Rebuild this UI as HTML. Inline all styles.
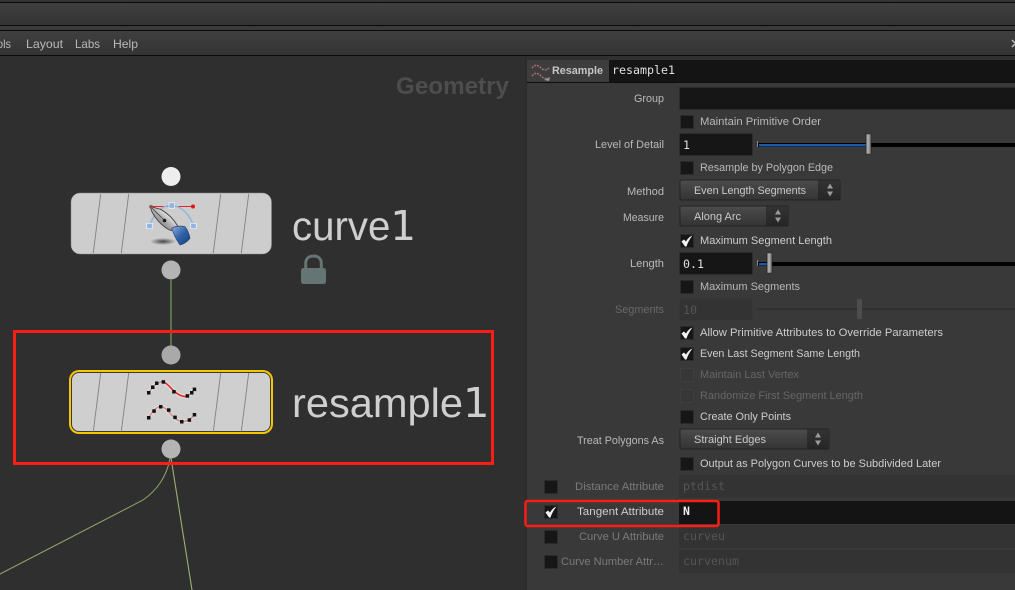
<!DOCTYPE html>
<html><head><meta charset="utf-8"><style>
html,body{margin:0;padding:0;background:#2f2f2f;width:1015px;height:590px;overflow:hidden}
svg{display:block}
text{font-family:"Liberation Sans",sans-serif;font-size:11px;fill:#b9b9b9}
.m{font-family:"DejaVu Sans Mono",monospace;font-size:11.5px;fill:#e0e0e0}
.dm{fill:#555;font-family:"DejaVu Sans Mono",monospace;font-size:11.5px}
.dl{fill:#686868}
.n{font-size:41px;fill:#cfcfcf}
.c{fill:#161616;stroke:#2b2b2b;stroke-width:1}
.dc{fill:#373737;stroke:#3f3f3f}
.t{fill:#cdcdcd}
</style></head><body>
<svg width="1015" height="590" viewBox="0 0 1015 590" xmlns="http://www.w3.org/2000/svg">
<defs>
<linearGradient id="bar" x1="0" y1="0" x2="0" y2="1"><stop offset="0" stop-color="#3f3f3f"/><stop offset="1" stop-color="#343434"/></linearGradient>
<linearGradient id="dd" x1="0" y1="0" x2="0" y2="1"><stop offset="0" stop-color="#4c4c4c"/><stop offset="1" stop-color="#343434"/></linearGradient>
<linearGradient id="ddr" x1="0" y1="0" x2="0" y2="1"><stop offset="0" stop-color="#333"/><stop offset="1" stop-color="#262626"/></linearGradient>
<linearGradient id="h" x1="0" y1="0" x2="1" y2="0"><stop offset="0" stop-color="#777"/><stop offset=".4" stop-color="#b5b5b5"/><stop offset="1" stop-color="#666"/></linearGradient>
<linearGradient id="cap" x1="0" y1="0" x2="1" y2="1"><stop offset="0" stop-color="#8fb0dc"/><stop offset=".5" stop-color="#2f62a8"/><stop offset="1" stop-color="#193f7c"/></linearGradient>
<linearGradient id="nib" x1="0" y1="1" x2="1" y2="0"><stop offset="0" stop-color="#4a4a4a"/><stop offset=".45" stop-color="#a8a8a8"/><stop offset=".7" stop-color="#efefef"/><stop offset="1" stop-color="#8a8a8a"/></linearGradient>
<radialGradient id="sh"><stop offset="0" stop-color="#444"/><stop offset="1" stop-color="#cdcdcd"/></radialGradient>
<path id="chk" d="M1 7L3.500 5L5.500 7C7 4.500 9 2 12 1C9.500 4 7.500 7.500 6 12L4.500 12Z" fill="#f2f2f2"/>
</defs>

<!-- Top bars -->
<rect width="1015" height="590" fill="#2f2f2f"/>
<rect y="0" width="1015" height="2" fill="#333"/>
<rect y="2" width="1015" height="1" fill="#0a0a0a"/>
<rect y="3" width="1015" height="22" fill="url(#bar)"/>
<rect y="25" width="1015" height="1" fill="#0a0a0a"/>
<rect y="26" width="1015" height="4" fill="#3a3a3a"/>
<rect y="30" width="1015" height="1" fill="#0a0a0a"/>
<rect y="31" width="1015" height="24" fill="url(#bar)"/>
<rect y="55" width="1015" height="1" fill="#0a0a0a"/>
<text x="-3" y="48" style="font-size:12px" textLength="14" lengthAdjust="spacingAndGlyphs">ols</text>
<text x="26" y="48" style="font-size:12px" textLength="37" lengthAdjust="spacingAndGlyphs">Layout</text>
<text x="75" y="48" style="font-size:12px" textLength="25" lengthAdjust="spacingAndGlyphs">Labs</text>
<text x="113" y="48" style="font-size:12px" textLength="25" lengthAdjust="spacingAndGlyphs">Help</text>
<path d="M1012 40l3 3M1015 44l-3 3" stroke="#bbb" stroke-width="1.500" fill="none"/>

<!-- Network -->
<text x="396" y="94" style="font-size:24px;font-weight:bold;fill:#4d4d4d" textLength="113" lengthAdjust="spacingAndGlyphs">Geometry</text>
<path d="M171 280V346" stroke="#7f9a62" stroke-width="1.200" fill="none"/>
<path d="M170 458C167 477 156 491 143 500L0 574" stroke="#8fa566" stroke-width="1" fill="none"/>
<path d="M171 458L192 590" stroke="#9bb070" stroke-width="1.100" fill="none"/>

<circle cx="171" cy="176.500" r="9.500" fill="#eeeeee"/>
<rect x="71" y="193" width="200.500" height="61" rx="9" fill="#cdcdcd" stroke="#8a8a8a" stroke-width=".5"/>
<path d="M100.700 194L93.300 253M128.700 194L121.300 253M220.700 194L213.300 253M248.700 194L241.300 253" stroke="#808080" stroke-width=".9" fill="none"/>
<circle cx="171" cy="270" r="9.500" fill="#b4b4b4"/>

<!-- pen icon -->
<ellipse cx="163" cy="241.500" rx="13" ry="3.500" fill="url(#sh)"/>
<path d="M150.700 206.500H193" stroke="#e22" stroke-width="1"/>
<circle cx="193" cy="206.500" r="2" fill="#e01818"/>
<path d="M149.500 226C154 213 162 205 171.500 205.500C182 206 190 215 193.500 226" stroke="#8fb8e0" stroke-width="1.500" fill="none"/>
<rect x="146.800" y="223.300" width="5.400" height="5.400" fill="#8db4e4" stroke="#fff" stroke-width=".6"/>
<rect x="169" y="202.800" width="5.400" height="5.400" fill="#8db4e4" stroke="#fff" stroke-width=".6"/>
<rect x="190.800" y="223.300" width="5.400" height="5.400" fill="#8db4e4" stroke="#fff" stroke-width=".6"/>
<path d="M150.500 206.500L161 209.500C168 213.500 174 219.500 178 226.500L171 230.500C163 227.500 155.500 219 151.500 211Z" fill="url(#nib)" stroke="#333" stroke-width=".8"/>
<circle cx="164.500" cy="220.500" r="1.800" fill="#1a1a1a"/>
<path d="M151 207L164 220" stroke="#333" stroke-width=".6"/>
<path d="M171.700 228.300C175 226 181 225.500 185 226.700C187.500 230 189.500 234.500 190 238.300C187.500 241.500 184 244 180 245C176.500 240 173.500 234 171.700 228.300Z" fill="url(#cap)" stroke="#1a3a70" stroke-width=".6"/>
<circle cx="151" cy="206.800" r="2" fill="#8c5a50" opacity=".8"/>

<text class="n" x="292" y="240" textLength="124" lengthAdjust="spacingAndGlyphs">curve<tspan style="font-family:'DejaVu Sans',sans-serif">1</tspan></text>
<!-- lock -->
<path d="M305.700 268V263.500C305.700 259 308.500 256 313.500 256S321.300 259 321.300 263.500V268" fill="none" stroke="#647573" stroke-width="3"/>
<rect x="301" y="268" width="25" height="16" rx="2.500" fill="#647573"/>

<circle cx="171" cy="355" r="9.500" fill="#a9a9a9"/>
<rect x="69" y="370" width="204" height="64" rx="10" fill="#f4c800"/>
<rect x="71" y="372" width="200" height="60" rx="8" fill="#3a3a3a"/>
<rect x="72" y="373" width="198" height="58" rx="7" fill="#cfcfcf"/>
<path d="M100.700 373L93.300 431.500M128.700 373L121.300 431.500M220.700 373L213.300 431.500M248.700 373L241.300 431.500" stroke="#808080" stroke-width=".9" fill="none"/>
<circle cx="171" cy="449" r="9.500" fill="#b4b4b4"/>

<!-- resample icon -->
<path d="M149 392.500C153 386 158 381.500 163.500 382C170 384 175 397 187 396.500C190 395 192 392 194.500 389" stroke="#e8e4e4" stroke-width="3.500" fill="none"/>
<path d="M149 417.500C153 410 157 406.500 161 406.500C168 407 174 423 184 421.500C189 421 192 418 194.500 414.500" stroke="#e8e4e4" stroke-width="3.500" fill="none"/>
<path d="M149 392.500C153 386 158 381.500 163.500 382" stroke="#bfa0a0" stroke-width="1.800" fill="none"/>
<path d="M163.500 382C170 384 175 397 187 396.500" stroke="#e2262a" stroke-width="1.600" fill="none"/>
<path d="M187 396.500C190 395 192 392 194.500 389" stroke="#bfa0a0" stroke-width="1.800" fill="none"/>
<path d="M149 417.500C153 410 157 406.500 161 406.500C168 407 174 423 184 421.500C189 421 192 418 194.500 414.500" stroke="#cf8f98" stroke-width="1.800" fill="none"/>
<g fill="#111">
<rect x="147" y="391" width="3.500" height="3.500"/><rect x="151" y="385.500" width="3.500" height="3.500"/><rect x="155" y="381.500" width="3.500" height="3.500"/><rect x="161.600" y="380.200" width="3.500" height="3.500"/><rect x="172.200" y="390" width="3.500" height="3.500"/><rect x="185.600" y="394.200" width="3.500" height="3.500"/><rect x="190" y="391" width="3.500" height="3.500"/><rect x="192.700" y="387.600" width="3.500" height="3.500"/>
<rect x="147" y="416" width="3.500" height="3.500"/><rect x="152.300" y="409.300" width="3.500" height="3.500"/><rect x="159" y="405" width="3.500" height="3.500"/><rect x="167" y="408.300" width="3.500" height="3.500"/><rect x="173.300" y="415.600" width="3.500" height="3.500"/><rect x="180" y="420" width="3.500" height="3.500"/><rect x="187.600" y="418.300" width="3.500" height="3.500"/><rect x="192.700" y="413" width="3.500" height="3.500"/>
</g>
<text class="n" x="292" y="417" textLength="197.500" lengthAdjust="spacingAndGlyphs">resample<tspan style="font-family:'DejaVu Sans',sans-serif">1</tspan></text>

<rect x="14.500" y="331.500" width="478" height="132" fill="none" stroke="#fa1e14" stroke-width="3"/>

<!-- Panel -->
<rect x="525" y="56" width="490" height="534" fill="#393939"/>
<rect x="525" y="56" width="2" height="534" fill="#2c2c2c"/>
<rect x="527" y="56" width="488" height="4" fill="#303030"/>
<rect x="527" y="60" width="488" height="22" fill="#3d3d3d"/>
<rect x="527" y="82" width="488" height="1" fill="#0e0e0e"/>
<!-- header icon -->
<path d="M532 68C535 64 538 65 541 68C543 70 546 71 549 68" stroke="#a86a70" stroke-width="1.500" stroke-dasharray="2 1" fill="none"/>
<path d="M532 76C535 72 538 73 541 76C543 78 545 79 547 78" stroke="#a86a70" stroke-width="1.500" stroke-dasharray="2 1" fill="none"/>
<path d="M544 80l6-3-1 4z" fill="#999"/>
<text x="552" y="74" style="font-weight:bold;font-size:11px;fill:#c5c5c5" textLength="51" lengthAdjust="spacingAndGlyphs">Resample</text>
<rect x="609" y="60" width="406" height="22" fill="#141414"/>
<text class="m" x="612" y="74" textLength="63" lengthAdjust="spacingAndGlyphs">resample1</text>

<!-- Group -->
<text x="634" y="102" textLength="30" lengthAdjust="spacingAndGlyphs">Group</text>
<rect x="679.500" y="87.500" width="340" height="22" fill="#161616" stroke="#2c2c2c"/>
<rect x="680.500" y="115.500" width="13" height="13" class="c"/>
<text x="700" y="125" textLength="121" lengthAdjust="spacingAndGlyphs">Maintain Primitive Order</text>

<!-- LOD -->
<text x="595" y="148" textLength="69" lengthAdjust="spacingAndGlyphs">Level of Detail</text>
<rect x="679.500" y="133.500" width="73" height="22" fill="#161616" stroke="#2c2c2c"/>
<text class="m" x="683" y="149">1</text>
<rect x="757" y="143" width="258" height="4" fill="#000"/>
<rect x="759" y="144" width="108" height="2.500" fill="#1c5aa8"/>
<rect x="757" y="141" width="1" height="6" fill="#888"/>
<rect x="866" y="134" width="5" height="20" fill="url(#h)" stroke="#222" stroke-width=".5"/>
<rect x="680.500" y="161.500" width="13" height="13" class="c"/>
<text x="700" y="171" textLength="133" lengthAdjust="spacingAndGlyphs">Resample by Polygon Edge</text>

<!-- Method -->
<text x="627" y="195" textLength="37" lengthAdjust="spacingAndGlyphs">Method</text>
<rect x="680" y="180" width="160" height="20" rx="1" fill="url(#dd)" stroke="#1d1d1d" stroke-width=".8"/>
<rect x="818" y="180.500" width="22" height="19" fill="url(#ddr)"/>
<path d="M827 188.500l3-5 3 5zM827 191.500l3 5 3-5z" fill="#9a9a9a"/>
<text x="694" y="194" style="fill:#c9c9c9" textLength="112" lengthAdjust="spacingAndGlyphs">Even Length Segments</text>

<text x="623" y="221" textLength="41" lengthAdjust="spacingAndGlyphs">Measure</text>
<rect x="680" y="206" width="108" height="20" rx="1" fill="url(#dd)" stroke="#1d1d1d" stroke-width=".8"/>
<rect x="766" y="206.500" width="22" height="19" fill="url(#ddr)"/>
<path d="M775 214.500l3-5 3 5zM775 217.500l3 5 3-5z" fill="#9a9a9a"/>
<text x="694" y="220" style="fill:#c9c9c9" textLength="47" lengthAdjust="spacingAndGlyphs">Along Arc</text>

<rect x="680.500" y="234.500" width="13" height="13" class="c"/>
<use href="#chk" x="680.500" y="234.500"/>
<text x="700" y="244" class="t" textLength="132" lengthAdjust="spacingAndGlyphs">Maximum Segment Length</text>

<text x="630" y="267" textLength="34" lengthAdjust="spacingAndGlyphs">Length</text>
<rect x="679.500" y="252.500" width="73" height="22" fill="#161616" stroke="#2c2c2c"/>
<text class="m" x="683" y="268" textLength="21" lengthAdjust="spacingAndGlyphs">0.1</text>
<rect x="757" y="262" width="258" height="4" fill="#000"/>
<rect x="759" y="263" width="9" height="2.500" fill="#1c5aa8"/>
<rect x="757" y="260" width="1" height="6" fill="#888"/>
<rect x="767" y="253" width="5" height="20" fill="url(#h)" stroke="#222" stroke-width=".5"/>

<rect x="680.500" y="280.500" width="13" height="13" class="c"/>
<text x="700" y="290" textLength="100" lengthAdjust="spacingAndGlyphs">Maximum Segments</text>

<text class="dl" x="615" y="313" textLength="49" lengthAdjust="spacingAndGlyphs">Segments</text>
<rect x="679.500" y="298.500" width="73" height="22" fill="#333" stroke="#373737"/>
<text class="dm" x="683" y="314" textLength="14" lengthAdjust="spacingAndGlyphs">10</text>
<rect x="757" y="308" width="258" height="2" fill="#303030"/>
<rect x="857" y="299" width="5" height="20" fill="#4d4d4d"/>

<rect x="680.500" y="326.500" width="13" height="13" class="c"/>
<use href="#chk" x="680.500" y="326.500"/>
<text x="700" y="336" class="t" textLength="243" lengthAdjust="spacingAndGlyphs">Allow Primitive Attributes to Override Parameters</text>

<rect x="680.500" y="347.500" width="13" height="13" class="c"/>
<use href="#chk" x="680.500" y="347.500"/>
<text x="700" y="357" class="t" textLength="160" lengthAdjust="spacingAndGlyphs">Even Last Segment Same Length</text>

<rect x="680.500" y="368.500" width="13" height="13" class="dc"/>
<text x="700" y="378" textLength="99" lengthAdjust="spacingAndGlyphs" style="fill:#666">Maintain Last Vertex</text>
<rect x="680.500" y="389.500" width="13" height="13" class="dc"/>
<text x="700" y="399" textLength="163" lengthAdjust="spacingAndGlyphs" style="fill:#666">Randomize First Segment Length</text>
<rect x="680.500" y="410.500" width="13" height="13" class="c"/>
<text x="700" y="420" class="t" textLength="91" lengthAdjust="spacingAndGlyphs">Create Only Points</text>

<text x="577" y="444" textLength="87" lengthAdjust="spacingAndGlyphs">Treat Polygons As</text>
<rect x="680" y="429" width="149" height="20" rx="1" fill="url(#dd)" stroke="#1d1d1d" stroke-width=".8"/>
<rect x="807" y="429.500" width="22" height="19" fill="url(#ddr)"/>
<path d="M815 437.500l3-5 3 5zM815 440.500l3 5 3-5z" fill="#9a9a9a"/>
<text x="694" y="443" style="fill:#c9c9c9" textLength="72" lengthAdjust="spacingAndGlyphs">Straight Edges</text>

<rect x="680.500" y="457.500" width="13" height="13" class="c"/>
<text x="700" y="467" class="t" textLength="241" lengthAdjust="spacingAndGlyphs">Output as Polygon Curves to be Subdivided Later</text>

<!-- Attribute rows -->
<rect x="544.500" y="480.500" width="13" height="13" class="c"/>
<text x="575" y="490" textLength="89" lengthAdjust="spacingAndGlyphs" style="fill:#7a7a7a">Distance Attribute</text>
<rect x="679" y="475" width="336" height="23" fill="#333"/>
<text class="dm" x="683" y="490" textLength="42" lengthAdjust="spacingAndGlyphs">ptdist</text>

<rect x="544.500" y="505.500" width="13" height="13" class="c"/>
<use href="#chk" x="544.500" y="505.500"/>
<text x="577" y="515" class="t" textLength="87" lengthAdjust="spacingAndGlyphs">Tangent Attribute</text>
<rect x="679" y="501" width="336" height="23" fill="#141414"/>
<text class="m" x="683" y="515" style="font-weight:bold;fill:#f0f0f0">N</text>

<rect x="544.500" y="530.500" width="13" height="13" class="c"/>
<text x="579" y="540" textLength="85" lengthAdjust="spacingAndGlyphs" style="fill:#7a7a7a">Curve U Attribute</text>
<rect x="679" y="525" width="336" height="23" fill="#333"/>
<text class="dm" x="683" y="540" textLength="42" lengthAdjust="spacingAndGlyphs">curveu</text>

<rect x="544.500" y="555.500" width="13" height="13" class="c"/>
<text x="561" y="565" textLength="103" lengthAdjust="spacingAndGlyphs" style="fill:#7a7a7a">Curve Number Attr…</text>
<rect x="679" y="550" width="336" height="23" fill="#333"/>
<text class="dm" x="683" y="565" textLength="56" lengthAdjust="spacingAndGlyphs">curvenum</text>

<rect x="525.500" y="501" width="193" height="25" rx="2" fill="none" stroke="#fa1e14" stroke-width="2.500"/>
</svg>
</body></html>
